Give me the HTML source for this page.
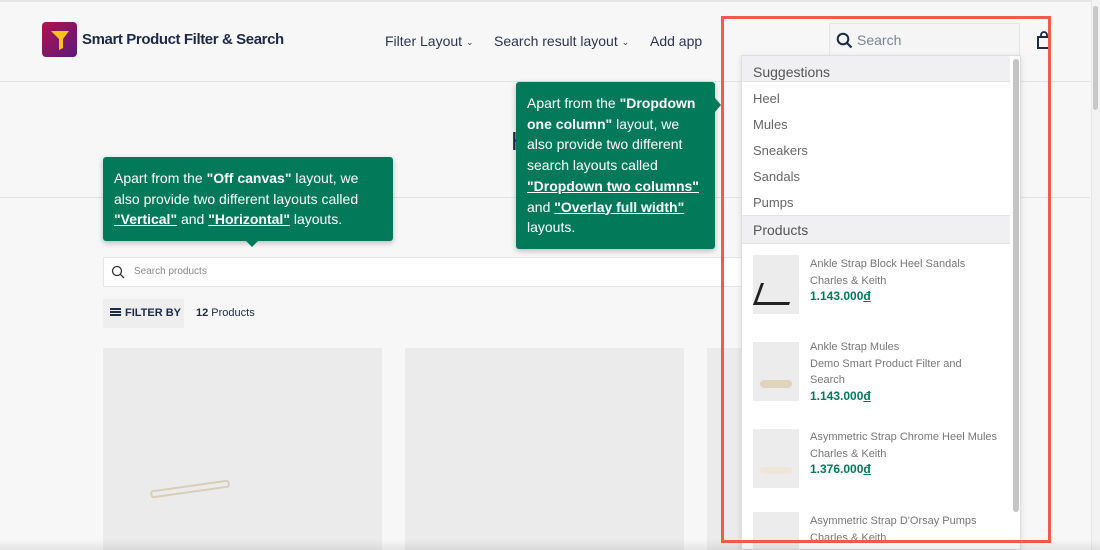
<!DOCTYPE html>
<html style="height:550px;overflow:hidden"><head><meta charset="utf-8"><style>
*{margin:0;padding:0;box-sizing:border-box}
body{width:1100px;height:550px;overflow:hidden;background:#f7f7f7;font-family:"Liberation Sans",sans-serif;position:relative;color:#333}
.abs{position:absolute}
.tip{background:#027a5a;color:#fff;font-size:14px;line-height:20.7px;border-radius:3px;box-shadow:0 2px 6px rgba(0,0,0,.25)}
.tip b{font-weight:bold}
.tip u{font-weight:bold}
.sg{font-size:13px;color:#666;position:absolute;left:753px}
.pn{font-size:11px;color:#777;line-height:16.5px}
.pr{font-size:12px;color:#027a5a;font-weight:bold}
.thumb{position:absolute;left:753px;width:46px;height:59px;background:#ececec}
.chev{font-size:9px;vertical-align:1px}
</style></head><body>
<div class="abs" style="left:0;top:0;width:1100px;height:2px;background:#e5e5e5"></div>
<div class="abs" style="left:0;top:81px;width:1090px;height:1px;background:#e2e2e2"></div>
<div class="abs" style="left:0;top:197px;width:1090px;height:1px;background:#e2e2e2"></div>
<div class="abs" style="left:42px;top:22px;width:35px;height:35px;border-radius:4px;background:linear-gradient(135deg,#b0124f,#5b1a7a)"></div>
<svg class="abs" style="left:48px;top:28px" width="24" height="24" viewBox="0 0 24 24"><path d="M3 3h18l-6 8v9l-4 2v-11z" fill="#f7c21c"/></svg>
<div class="abs" style="left:82px;top:31px;font-size:15px;font-weight:bold;color:#1c2a4a;letter-spacing:-.4px">Smart Product Filter &amp; Search</div>
<div class="abs" style="left:385px;top:33px;font-size:14px;color:#2a3552">Filter Layout <span class="chev">&#8964;</span></div>
<div class="abs" style="left:494px;top:33px;font-size:14px;color:#2a3552">Search result layout <span class="chev">&#8964;</span></div>
<div class="abs" style="left:650px;top:33px;font-size:14px;color:#2a3552">Add app</div>
<div class="abs" style="left:511px;top:126px;font-size:26px;color:#1c2a4a">H</div>
<div class="abs" style="left:103px;top:257px;width:640px;height:30px;background:#fff;border:1px solid #e6e6e6"></div>
<svg class="abs" style="left:111px;top:265px" width="14" height="14" viewBox="0 0 14 14"><circle cx="6" cy="6" r="4.5" fill="none" stroke="#333" stroke-width="1.3"/><path d="M9.3 9.3L13 13" stroke="#333" stroke-width="1.3"/></svg>
<div class="abs" style="left:134px;top:266px;font-size:10px;color:#888">Search products</div>
<div class="abs" style="left:103px;top:299px;width:81px;height:29px;background:#eeeeee"></div>
<div class="abs" style="left:110px;top:308px;width:11px;height:2px;background:#1c2a4a;box-shadow:0 3px 0 #1c2a4a,0 6px 0 #1c2a4a"></div>
<div class="abs" style="left:125px;top:307px;font-size:11px;font-weight:bold;color:#1c2a4a">FILTER BY</div>
<div class="abs" style="left:196px;top:307px;font-size:11px;color:#1c2a4a"><b>12</b> Products</div>
<div class="abs" style="left:103px;top:348px;width:279px;height:202px;background:#ebebeb"></div>
<div class="abs" style="left:405px;top:348px;width:279px;height:202px;background:#ebebeb"></div>
<div class="abs" style="left:707px;top:348px;width:40px;height:202px;background:#ebebeb"></div>
<div class="abs" style="left:150px;top:485px;width:80px;height:8px;border:2px solid #d8cdb8;border-radius:3px;transform:rotate(-8deg)"></div>
<div class="abs tip" style="left:103px;top:157px;width:290px;height:84px;padding:11px 11px">Apart from the <b>"Off canvas"</b> layout, we also provide two different layouts called <u>"Vertical"</u> and <u>"Horizontal"</u> layouts.</div>
<div class="abs" style="left:245px;top:240px;width:0;height:0;border-left:7px solid transparent;border-right:7px solid transparent;border-top:7px solid #027a5a"></div>
<div class="abs tip" style="left:516px;top:82px;width:199px;height:167px;padding:11px 11px">Apart from the <b>"Dropdown one column"</b> layout, we also provide two different search layouts called <u>"Dropdown two columns"</u> and <u>"Overlay full width"</u> layouts.</div>
<div class="abs" style="left:715px;top:98px;width:0;height:0;border-top:7px solid transparent;border-bottom:7px solid transparent;border-left:6px solid #027a5a"></div>
<div class="abs" style="left:829px;top:23px;width:191px;height:33px;background:#f5f5f5;border:1px solid #e6e6e6"></div>
<svg class="abs" style="left:836px;top:32px" width="17" height="17" viewBox="0 0 17 17"><circle cx="7" cy="7" r="5.3" fill="none" stroke="#1c2a4a" stroke-width="2"/><path d="M11 11L15.5 15.5" stroke="#1c2a4a" stroke-width="2.2"/></svg>
<div class="abs" style="left:857px;top:32px;font-size:14px;color:#7a8294">Search</div>
<svg class="abs" style="left:1036px;top:31px" width="16" height="18" viewBox="0 0 16 18"><path d="M2 6h12v11H2z" fill="none" stroke="#1c2a4a" stroke-width="2"/><path d="M5 6V4a3 3 0 016 0v2" fill="none" stroke="#1c2a4a" stroke-width="1.8"/></svg>
<div class="abs" style="left:741px;top:55px;width:280px;height:495px;background:#fff;border:1px solid #ddd;box-shadow:0 2px 6px rgba(0,0,0,.12);overflow:hidden">
<div style="position:absolute;left:-742px;top:-56px;width:1100px;height:550px">
<div class="abs" style="left:742px;top:56px;width:268px;height:26px;background:#f0f0f2;border-bottom:1px solid #e4e4e4"></div>
<div class="abs" style="left:753px;top:64px;font-size:14px;color:#555">Suggestions</div>
<div class="sg" style="top:91px">Heel</div>
<div class="sg" style="top:117px">Mules</div>
<div class="sg" style="top:143px">Sneakers</div>
<div class="sg" style="top:169px">Sandals</div>
<div class="sg" style="top:195px">Pumps</div>
<div class="abs" style="left:742px;top:215px;width:268px;height:29px;background:#f0f0f2;border-top:1px solid #e4e4e4;border-bottom:1px solid #e4e4e4"></div>
<div class="abs" style="left:753px;top:222px;font-size:14px;color:#555">Products</div>
<div class="abs" style="left:1013px;top:59px;width:6px;height:453px;background:#c4c4c4;border-radius:3px"></div>
<div class="thumb" style="top:255px"></div>
<div class="abs" style="left:757px;top:283px;width:36px;height:22px;border-left:3px solid #222;border-bottom:3px solid #222;transform:skewX(-20deg)"></div>
<div class="abs" style="left:810px;top:256px"><div class="pn">Ankle Strap Block Heel Sandals</div><div class="pn">Charles &amp; Keith</div><div class="pr">1.143.000<u>đ</u></div></div>
<div class="thumb" style="top:342px"></div>
<div class="abs" style="left:760px;top:380px;width:32px;height:8px;background:#e0d4bc;border-radius:4px"></div>
<div class="abs" style="left:810px;top:339px"><div class="pn">Ankle Strap Mules</div><div class="pn">Demo Smart Product Filter and<br>Search</div><div class="pr">1.143.000<u>đ</u></div></div>
<div class="thumb" style="top:429px"></div>
<div class="abs" style="left:760px;top:467px;width:32px;height:7px;background:#eee6d8;border-radius:4px"></div>
<div class="abs" style="left:810px;top:429px"><div class="pn">Asymmetric Strap Chrome Heel Mules</div><div class="pn">Charles &amp; Keith</div><div class="pr">1.376.000<u>đ</u></div></div>
<div class="thumb" style="top:512px"></div>
<div class="abs" style="left:810px;top:513px"><div class="pn">Asymmetric Strap D'Orsay Pumps</div><div class="pn">Charles &amp; Keith</div></div>
</div></div>
<div class="abs" style="left:1091px;top:0;width:9px;height:550px;background:#f3f3f3;border-left:1px solid #e6e6e6"></div>
<div class="abs" style="left:1093px;top:6px;width:5px;height:104px;background:#c8c8c8;border-radius:3px"></div>
<div class="abs" style="left:721px;top:16px;width:330px;height:527px;border:3px solid #f25a4c"></div>
<div class="abs" style="left:0;top:540px;width:1100px;height:10px;background:linear-gradient(transparent,rgba(0,0,0,.08))"></div>
</body></html>
